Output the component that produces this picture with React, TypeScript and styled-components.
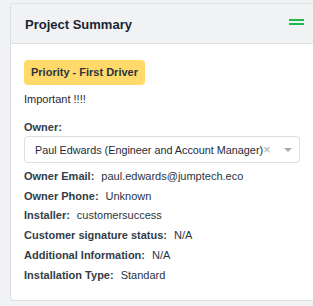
import React from "react";
import styled, { createGlobalStyle } from "styled-components";

const GlobalStyle = createGlobalStyle`
  html, body {
    margin: 0;
    padding: 0;
    background: #f1f2f4;
    font-family: "Liberation Sans", Arial, sans-serif;
    color: #1e2a38;
    overflow: hidden;
  }
`;

const Page = styled.div`
  padding: 3px 0 0 10px;
  width: 313px;
  height: 306px;
  box-sizing: border-box;
  overflow: hidden;
`;

const Card = styled.div`
  width: 306px;
  height: 298px;
  box-sizing: border-box;
  background: #fff;
  border: 1px solid #dcdee2;
  border-radius: 4px;
  overflow: hidden;
`;

const Header = styled.div`
  display: flex;
  align-items: center;
  justify-content: space-between;
  height: 40px;
  padding: 1px 0 0 14px;
  box-sizing: border-box;
  background: #f1f2f4;
  border-bottom: 1px solid #dcdee2;
`;

const Title = styled.h3`
  margin: 0;
  font-size: 13px;
  font-weight: 700;
  color: #1b2532;
`;

const MenuIcon = styled.div`
  display: flex;
  flex-direction: column;
  gap: 2px;
  width: 15px;
  margin-right: 11px;
  margin-top: -4px;

  span {
    display: block;
    height: 2px;
    background: #1fba4f;
  }
`;

const Body = styled.div`
  padding: 16px 13px 0 13px;
`;

const Badge = styled.div`
  display: inline-block;
  height: 25px;
  line-height: 25px;
  background: #ffd96a;
  border-radius: 4px;
  padding: 0 7px;
  font-size: 11px;
  font-weight: 700;
  color: #2c3440;
`;

const Note = styled.div`
  margin-top: 7px;
  line-height: 14px;
  font-size: 11px;
  color: #1e2a38;
`;

const Label = styled.div`
  margin-top: 14px;
  line-height: 14px;
  font-size: 11px;
  font-weight: 700;
  color: #333d48;
`;

const Select = styled.div`
  display: flex;
  align-items: center;
  width: 276px;
  height: 27px;
  box-sizing: border-box;
  margin-top: 2px;
  padding: 0 0 0 10px;
  border: 1px solid #dcdee2;
  border-radius: 4px;
  font-size: 10.8px;
  color: #1e2a38;
`;

const SelectValue = styled.span`
  white-space: nowrap;
`;

const Clear = styled.span`
  color: #a7abb1;
  font-size: 13px;
  line-height: 1;
`;

const Caret = styled.span`
  margin-left: 13px;
  width: 0;
  height: 0;
  border-left: 4px solid transparent;
  border-right: 4px solid transparent;
  border-top: 4px solid #a7abb1;
`;

const Details = styled.div`
  margin-top: 3px;
  display: flex;
  flex-direction: column;
`;

const Row = styled.div`
  display: flex;
  align-items: center;
  height: 19.8px;
  font-size: 11px;
  white-space: nowrap;
`;

const Key = styled.span`
  font-weight: 700;
  color: #333d48;
  margin-right: 7px;
`;

const Value = styled.span`
  color: #2a3542;
`;

const details: [string, string][] = [
  ["Owner Email:", "paul.edwards@jumptech.eco"],
  ["Owner Phone:", "Unknown"],
  ["Installer:", "customersuccess"],
  ["Customer signature status:", "N/A"],
  ["Additional Information:", "N/A"],
  ["Installation Type:", "Standard"],
];

const App: React.FC = () => {
  return (
    <>
      <GlobalStyle />
      <Page>
        <Card>
          <Header>
            <Title>Project Summary</Title>
            <MenuIcon>
              <span />
              <span />
            </MenuIcon>
          </Header>
          <Body>
            <Badge>Priority - First Driver</Badge>
            <Note>Important !!!!</Note>
            <Label>Owner:</Label>
            <Select>
              <SelectValue>Paul Edwards (Engineer and Account Manager)</SelectValue>
              <Clear>×</Clear>
              <Caret />
            </Select>
            <Details>
              {details.map(([k, v]) => (
                <Row key={k}>
                  <Key>{k}</Key>
                  <Value>{v}</Value>
                </Row>
              ))}
            </Details>
          </Body>
        </Card>
      </Page>
    </>
  );
};

export default App;
